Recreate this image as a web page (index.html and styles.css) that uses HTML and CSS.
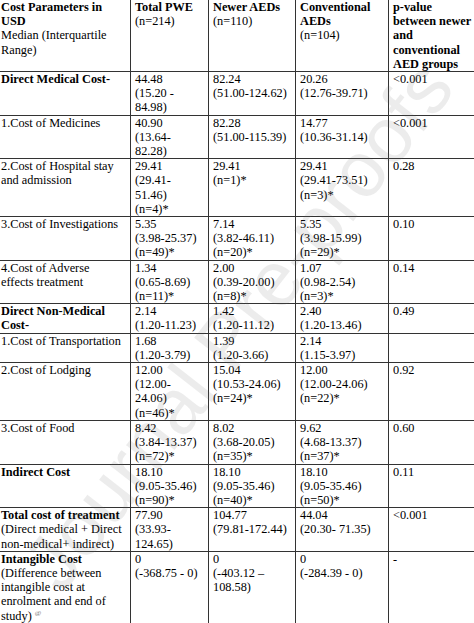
FILE: index.html
```html
<!DOCTYPE html>
<html lang="en">
<head>
<meta charset="utf-8">
<title>Cost Parameters</title>
<link rel="stylesheet" href="styles.css">
</head>
<body>
<div class="page">
<table class="cost">
  <colgroup>
    <col class="c1"><col class="c2"><col class="c3"><col class="c4"><col class="c5">
  </colgroup>
  <thead>
    <tr>
      <th><b>Cost Parameters in<br>USD</b><br><span class="reg">Median (Interquartile<br>Range)</span></th>
      <th><b>Total PWE</b><br><span class="reg">(n=214)</span></th>
      <th><b>Newer AEDs</b><br><span class="reg">(n=110)</span></th>
      <th><b>Conventional<br>AEDs</b><br><span class="reg">(n=104)</span></th>
      <th><b>p-value<br>between newer<br>and<br>conventional<br>AED groups</b></th>
    </tr>
  </thead>
  <tbody>
    <tr>
      <td><b>Direct Medical Cost-</b></td>
      <td>44.48<br>(15.20 -<br>84.98)</td>
      <td>82.24<br>(51.00-124.62)</td>
      <td>20.26<br>(12.76-39.71)</td>
      <td>&lt;0.001</td>
    </tr>
    <tr>
      <td>1.Cost of Medicines</td>
      <td>40.90<br>(13.64-<br>82.28)</td>
      <td>82.28<br>(51.00-115.39)</td>
      <td>14.77<br>(10.36-31.14)</td>
      <td>&lt;0.001</td>
    </tr>
    <tr>
      <td>2.Cost of Hospital stay<br>and admission</td>
      <td>29.41<br>(29.41-<br>51.46)<br>(n=4)*</td>
      <td>29.41<br>(n=1)*</td>
      <td>29.41<br>(29.41-73.51)<br>(n=3)*</td>
      <td>0.28</td>
    </tr>
    <tr>
      <td>3.Cost of Investigations</td>
      <td>5.35<br>(3.98-25.37)<br>(n=49)*</td>
      <td>7.14<br>(3.82-46.11)<br>(n=20)*</td>
      <td>5.35<br>(3.98-15.99)<br>(n=29)*</td>
      <td>0.10</td>
    </tr>
    <tr>
      <td>4.Cost of Adverse<br>effects treatment</td>
      <td>1.34<br>(0.65-8.69)<br>(n=11)*</td>
      <td>2.00<br>(0.39-20.00)<br>(n=8)*</td>
      <td>1.07<br>(0.98-2.54)<br>(n=3)*</td>
      <td>0.14</td>
    </tr>
    <tr>
      <td><b>Direct Non-Medical<br>Cost-</b></td>
      <td>2.14<br>(1.20-11.23)</td>
      <td>1.42<br>(1.20-11.12)</td>
      <td>2.40<br>(1.20-13.46)</td>
      <td>0.49</td>
    </tr>
    <tr>
      <td>1.Cost of Transportation</td>
      <td>1.68<br>(1.20-3.79)</td>
      <td>1.39<br>(1.20-3.66)</td>
      <td>2.14<br>(1.15-3.97)</td>
      <td></td>
    </tr>
    <tr>
      <td>2.Cost of Lodging</td>
      <td>12.00<br>(12.00-<br>24.06)<br>(n=46)*</td>
      <td>15.04<br>(10.53-24.06)<br>(n=24)*</td>
      <td>12.00<br>(12.00-24.06)<br>(n=22)*</td>
      <td>0.92</td>
    </tr>
    <tr>
      <td>3.Cost of Food</td>
      <td>8.42<br>(3.84-13.37)<br>(n=72)*</td>
      <td>8.02<br>(3.68-20.05)<br>(n=35)*</td>
      <td>9.62<br>(4.68-13.37)<br>(n=37)*</td>
      <td>0.60</td>
    </tr>
    <tr>
      <td><b>Indirect Cost</b></td>
      <td>18.10<br>(9.05-35.46)<br>(n=90)*</td>
      <td>18.10<br>(9.05-35.46)<br>(n=40)*</td>
      <td>18.10<br>(9.05-35.46)<br>(n=50)*</td>
      <td>0.11</td>
    </tr>
    <tr>
      <td><b>Total cost of treatment</b><br>(Direct medical + Direct<br>non-medical+ indirect)</td>
      <td>77.90<br>(33.93-<br>124.65)</td>
      <td>104.77<br>(79.81-172.44)</td>
      <td>44.04<br>(20.30- 71.35)</td>
      <td>&lt;0.001</td>
    </tr>
    <tr>
      <td><b>Intangible Cost</b><br>(Difference between<br>intangible cost at<br>enrolment and end of<br>study) <sup class="note">@</sup></td>
      <td>0<br>(-368.75 - 0)</td>
      <td>0<br>(-403.12 –<br>108.58)</td>
      <td>0<br>(-284.39 - 0)</td>
      <td>-</td>
    </tr>
  </tbody>
</table>
<div class="watermark">Journal Pre-proofs</div>
</div>
</body>
</html>
```
FILE: styles.css
```css
html, body {
  margin: 0;
  padding: 0;
  background: #ffffff;
  overflow: hidden;
}

.page {
  position: relative;
  width: 474px;
  height: 623px;
  overflow: hidden;
}

.cost {
  border-collapse: collapse;
  table-layout: fixed;
  width: 482px;
  margin-left: -4px;
  margin-top: -1px;
  font-family: "Liberation Serif", "Times New Roman", serif;
  font-size: 12.3px;
  line-height: 14.2px;
  color: #000000;
}

.c1 { width: 134px; }
.c2 { width: 78px; }
.c3 { width: 87px; }
.c4 { width: 93px; }
.c5 { width: 90px; }

.cost th,
.cost td {
  border: 1px solid #333333;
  padding: 0 2px 0 4px;
  text-align: left;
  vertical-align: top;
  white-space: nowrap;
  overflow: hidden;
  font-weight: normal;
}

.cost b {
  font-weight: bold;
}

.reg {
  font-weight: normal;
}

.note {
  font-size: 7px;
  line-height: 0;
  vertical-align: 5px;
  color: #777777;
}

.watermark {
  position: absolute;
  left: 238px;
  top: 325px;
  transform: translate(-50%, -50%) rotate(-52deg);
  font-family: "Liberation Sans", Arial, sans-serif;
  font-size: 78px;
  line-height: 1;
  white-space: nowrap;
  color: rgba(110, 110, 110, 0.13);
  pointer-events: none;
}
```
